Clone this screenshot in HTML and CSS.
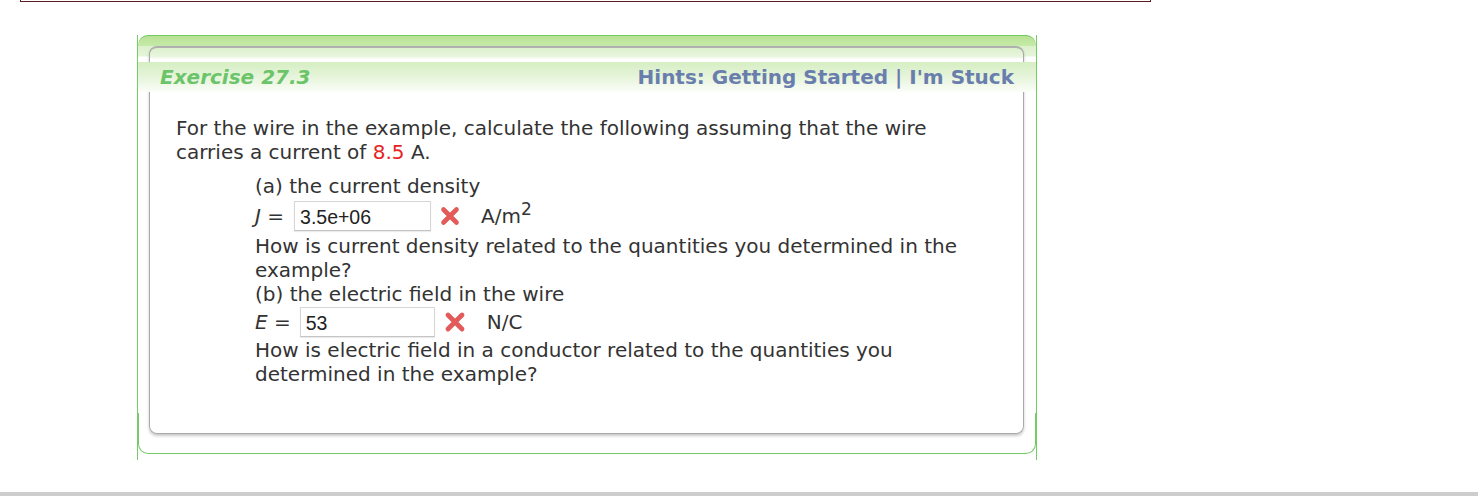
FILE: index.html
```html
<!DOCTYPE html>
<html>
<head>
<meta charset="utf-8">
<link rel="stylesheet" href="styles.css">
</head>
<body>
<div class="topbox"></div>
<div class="frame">
  <div class="cap"></div>
  <div class="sheet">
    <div class="header">
      <span class="title">Exercise 27.3</span>
      <span class="hints">Hints: Getting Started | I'm Stuck</span>
    </div>
    <div class="content">
      <p class="intro">For the wire in the example, calculate the following assuming that the wire carries a current of <span class="red">8.5</span> A.</p>
      <div class="parts">
        <div class="line">(a) the current density</div>
        <div class="answer answer-j">
          <span class="label"><i>J</i> =</span>
          <input class="field field-j" type="text" value="3.5e+06">
          <svg class="wrong" width="20" height="20" viewBox="0 0 20 20"><path d="M3.5 3.5 L16.5 16.5 M16.5 3.5 L3.5 16.5" stroke="#e25a5a" stroke-width="4.6" stroke-linecap="round"/></svg>
          <span class="unit">A/m<sup>2</sup></span>
        </div>
        <div class="line">How is current density related to the quantities you determined in the example?</div>
        <div class="line">(b) the electric field in the wire</div>
        <div class="answer answer-e">
          <span class="label"><i>E</i> =</span>
          <input class="field field-e" type="text" value="53">
          <svg class="wrong" width="22" height="22" viewBox="0 0 22 22"><path d="M4 4 L18 18 M18 4 L4 18" stroke="#e25a5a" stroke-width="4.8" stroke-linecap="round"/></svg>
          <span class="unit">N/C</span>
        </div>
        <div class="line">How is electric field in a conductor related to the quantities you determined in the example?</div>
      </div>
    </div>
  </div>
  <div class="foot"></div>
</div>
<div class="bottom-rule"></div>
</body>
</html>
```

FILE: styles.css
```css
html, body {
  margin: 0;
  padding: 0;
  background: #fff;
}
body {
  font-family: "DejaVu Sans", Verdana, sans-serif;
  font-size: 20px;
  color: #333;
  width: 1478px;
  height: 496px;
  overflow: hidden;
}
.topbox {
  margin-left: 20px;
  width: 1129px;
  height: 1px;
  border: 1px solid #5b1c21;
  border-top: none;
}
.frame {
  margin-top: 33px;
  margin-left: 137px;
  width: 898px;
  border-left: 1px solid #74cc66;
  border-right: 1px solid #74cc66;
  padding-bottom: 6px;
  background: linear-gradient(#fff 0, #fff 11px, #dcf1cc 11px, #e6f5da 21px, #fff 22px);
}
.cap {
  height: 10px;
  background: linear-gradient(#b8e296, #c6eaa8);
  border-top: 1px solid #72c95f;
  border-radius: 10px 10px 0 0;
}
.sheet {
  position: relative;
  z-index: 1;
  margin: 0 12px 0 11px;
  border: 1px solid #a9a9a9;
  border-top: 2px solid #b0b0b0;
  border-radius: 8px;
  background: linear-gradient(#dcf1cc 0, #eaf6e0 9px, #fff 11px);
  box-shadow: 0 2px 3px rgba(0, 0, 0, 0.22);
  padding-top: 14px;
  box-sizing: border-box;
  height: 388px;
}
.header {
  margin: 0 -13px 0 -12px;
  height: 30px;
  padding: 0 22px 0 22px;
  display: flex;
  justify-content: space-between;
  align-items: center;
  background: linear-gradient(#d5eec2, #eaf6e0 60%, #fbfef9);
  font-weight: bold;
  font-size: 20px;
}
.title {
  color: #6cc46a;
  font-style: italic;
}
.hints {
  color: #6a7eae;
}
.content {
  padding: 24px 0 0 26px;
  width: 800px;
  line-height: 24px;
}
.intro {
  margin: 0 0 10px 0;
}
.red {
  color: #e8231c;
}
.parts {
  margin-left: 79px;
}
.answer {
  display: flex;
  align-items: center;
}
.answer-j {
  height: 36px;
}
.answer-e {
  height: 32px;
}
.label {
  white-space: nowrap;
}
.label i {
  font-style: italic;
}
.field {
  height: 30px;
  box-sizing: border-box;
  border: 1px solid #d6d6d6;
  border-bottom-color: #c4c4c4;
  box-shadow: 0 1px 1px rgba(0, 0, 0, 0.08);
  font-family: "Liberation Sans", Arial, sans-serif;
  font-size: 19.5px;
  color: #222;
  padding: 2px 5px 0 5px;
  outline: none;
  background: #fff;
}
.field-j {
  margin-left: 10px;
  width: 137px;
}
.field-e {
  margin-left: 9px;
  width: 135px;
}
.wrong {
  margin-left: 9px;
}
.unit {
  margin-left: 21px;
}
.unit sup {
  font-size: 17px;
  line-height: 0;
  vertical-align: 8px;
}
.foot {
  height: 40px;
  margin-top: -21px;
  border: 1px solid #74cc66;
  border-top: none;
  border-radius: 0 0 10px 10px;
}
.bottom-rule {
  margin-top: 32px;
  height: 4px;
  background: #cdcdcd;
}
```
